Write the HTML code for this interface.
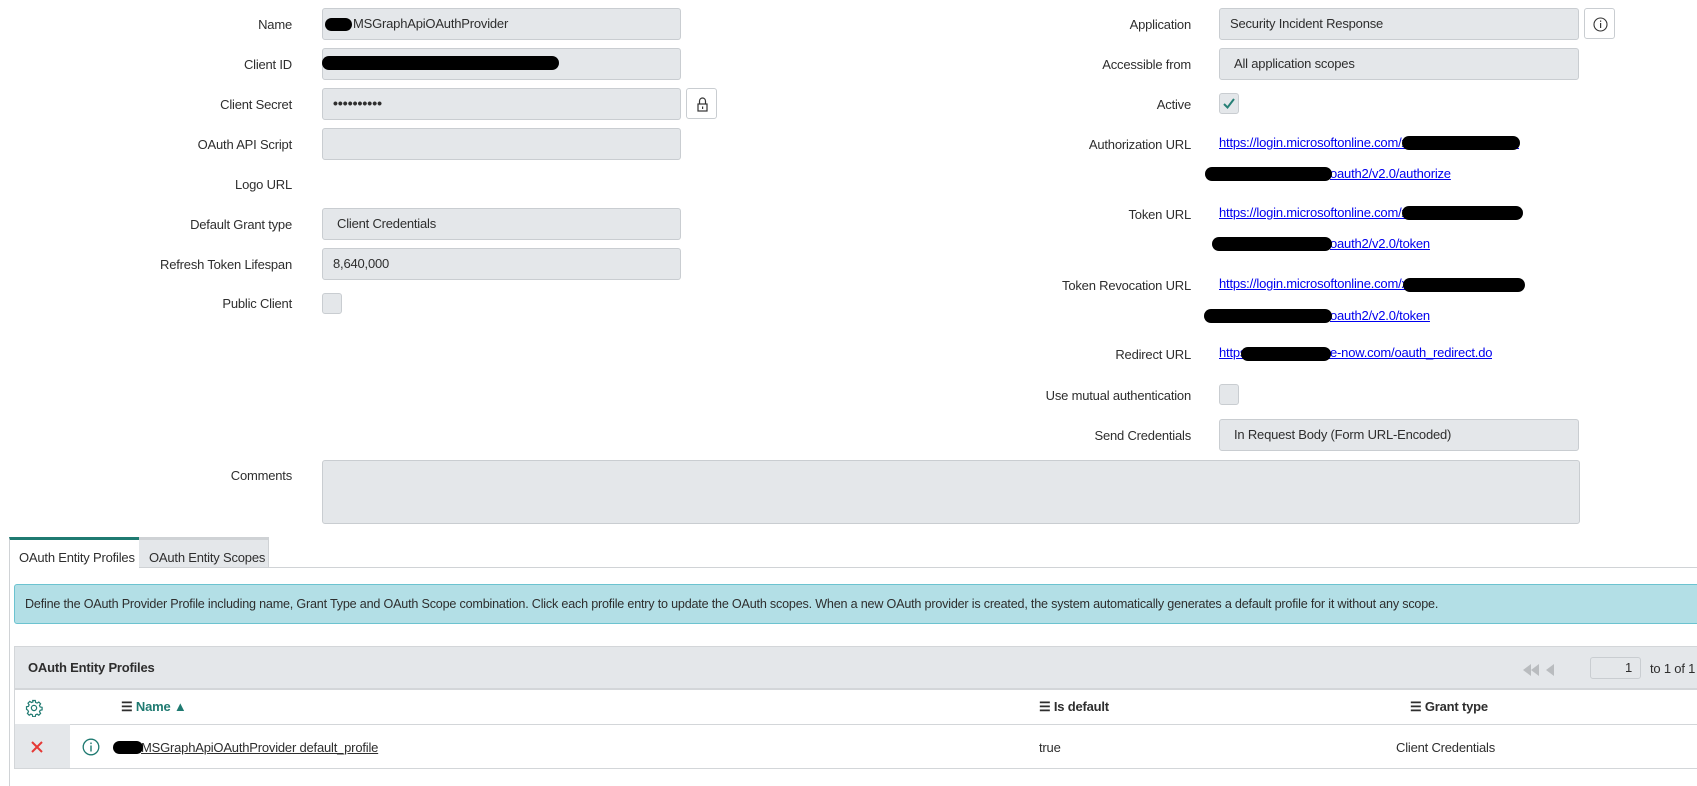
<!DOCTYPE html>
<html><head><meta charset="utf-8"><style>
*{box-sizing:border-box;margin:0;padding:0}
body{width:1697px;height:786px;background:#fff;font-family:"Liberation Sans",sans-serif;font-size:13px;color:#2e2e2e;position:relative;overflow:hidden;letter-spacing:-0.2px}
.a{position:absolute;white-space:nowrap}
.lbl{position:absolute;text-align:right;white-space:nowrap}
.inp{position:absolute;background:#e4e7ea;border:1px solid #c9cdd1;border-radius:3px;padding-left:10px;line-height:29px;white-space:nowrap}
.cb{position:absolute;width:20px;height:21px;background:#e4e7ea;border:1px solid #c9cdd1;border-radius:3px}
.btn{position:absolute;width:31px;height:31px;background:#fff;border:1px solid #c9cdd1;border-radius:3px}
.blob{position:absolute;background:#000;border-radius:8px}
.lk{position:absolute;white-space:nowrap;color:#0000ee;text-decoration:underline;overflow:hidden}
</style></head><body>
<!-- left column -->
<div class="lbl" style="right:1405px;top:17px">Name</div>
<div class="inp" style="left:322px;top:8px;width:359px;height:32px;padding-left:30px">MSGraphApiOAuthProvider</div>
<div class="blob" style="left:325px;top:18px;width:27px;height:13px"></div>
<div class="lbl" style="right:1405px;top:57px">Client ID</div>
<div class="inp" style="left:322px;top:48px;width:359px;height:32px"></div>
<div class="blob" style="left:322px;top:56px;width:237px;height:14px"></div>
<div class="lbl" style="right:1405px;top:97px">Client Secret</div>
<div class="inp" style="left:322px;top:88px;width:359px;height:32px;font-size:14px;letter-spacing:0;font-weight:bold">••••••••••</div>
<div class="btn" style="left:686px;top:88px"><svg width="31" height="31" viewBox="0 0 31 31"><path d="M12.5 15v-3a3 3 0 0 1 6 0v3" fill="none" stroke="#333" stroke-width="1.2"/><rect x="11" y="15" width="9" height="7" fill="none" stroke="#333" stroke-width="1.2"/><rect x="15" y="17.5" width="1.2" height="2.5" fill="#333"/></svg></div>
<div class="lbl" style="right:1405px;top:137px">OAuth API Script</div>
<div class="inp" style="left:322px;top:128px;width:359px;height:32px"></div>
<div class="lbl" style="right:1405px;top:177px">Logo URL</div>
<div class="lbl" style="right:1405px;top:217px">Default Grant type</div>
<div class="inp" style="left:322px;top:208px;width:359px;height:32px;padding-left:14px">Client Credentials</div>
<div class="lbl" style="right:1405px;top:257px">Refresh Token Lifespan</div>
<div class="inp" style="left:322px;top:248px;width:359px;height:32px">8,640,000</div>
<div class="lbl" style="right:1405px;top:296px">Public Client</div>
<div class="cb" style="left:322px;top:293px"></div>
<div class="lbl" style="right:1405px;top:468px">Comments</div>
<div class="inp" style="left:322px;top:460px;width:1258px;height:64px"></div>

<!-- right column -->
<div class="lbl" style="right:506px;top:17px">Application</div>
<div class="inp" style="left:1219px;top:8px;width:360px;height:32px">Security Incident Response</div>
<div class="btn" style="left:1584px;top:8px"><svg width="31" height="31" viewBox="0 0 31 31"><circle cx="15.5" cy="15.5" r="6.5" fill="none" stroke="#333" stroke-width="1.1"/><rect x="15" y="14" width="1.2" height="5" fill="#333"/><rect x="15" y="11.5" width="1.2" height="1.3" fill="#333"/></svg></div>
<div class="lbl" style="right:506px;top:57px">Accessible from</div>
<div class="inp" style="left:1219px;top:48px;width:360px;height:32px;padding-left:14px">All application scopes</div>
<div class="lbl" style="right:506px;top:97px">Active</div>
<div class="cb" style="left:1219px;top:93px"><svg width="18" height="19" viewBox="0 0 18 19"><path d="M4 10l3.5 3.5L14 5" fill="none" stroke="#278076" stroke-width="2"/></svg></div>

<div class="lbl" style="right:506px;top:137px">Authorization URL</div>
<div class="lk" style="left:1219px;top:135px;width:300px">https://login.microsoftonline.com/xxxxxxxxxxxxxxxxxxxxxxxxxxxxxx</div>
<div class="blob" style="left:1402px;top:136px;width:118px;height:14px"></div>
<div class="lk" style="left:1330px;top:166px">oauth2/v2.0/authorize</div>
<div class="blob" style="left:1205px;top:167px;width:127px;height:14px"></div>

<div class="lbl" style="right:506px;top:207px">Token URL</div>
<div class="lk" style="left:1219px;top:205px;width:300px">https://login.microsoftonline.com/xxxxxxxxxxxxxxxxxxxxxxxxxxxxxx</div>
<div class="blob" style="left:1402px;top:206px;width:121px;height:14px"></div>
<div class="lk" style="left:1330px;top:236px">oauth2/v2.0/token</div>
<div class="blob" style="left:1212px;top:237px;width:120px;height:14px"></div>

<div class="lbl" style="right:506px;top:278px">Token Revocation URL</div>
<div class="lk" style="left:1219px;top:276px;width:300px">https://login.microsoftonline.com/xxxxxxxxxxxxxxxxxxxxxxxxxxxxxx</div>
<div class="blob" style="left:1403px;top:278px;width:122px;height:14px"></div>
<div class="lk" style="left:1330px;top:308px">oauth2/v2.0/token</div>
<div class="blob" style="left:1204px;top:309px;width:128px;height:14px"></div>

<div class="lbl" style="right:506px;top:347px">Redirect URL</div>
<div class="lk" style="left:1219px;top:345px;width:112px">httpsxxxxxxxxxxxxxxxxxxxxxxxxx</div>
<div class="lk" style="left:1330px;top:345px">e-now.com/oauth_redirect.do</div>
<div class="blob" style="left:1241px;top:347px;width:90px;height:14px"></div>

<div class="lbl" style="right:506px;top:388px">Use mutual authentication</div>
<div class="cb" style="left:1219px;top:384px"></div>
<div class="lbl" style="right:506px;top:428px">Send Credentials</div>
<div class="inp" style="left:1219px;top:419px;width:360px;height:32px;padding-left:14px">In Request Body (Form URL-Encoded)</div>

<!-- tabs -->
<div class="a" style="left:9px;top:567px;width:1px;height:219px;background:#d0d3d6"></div>
<div class="a" style="left:268px;top:567px;width:1429px;height:1px;background:#d0d3d6"></div>
<div class="a" style="left:9px;top:537px;width:130px;height:31px;border-top:3px solid #1f7a71;background:#fff;border-left:1px solid #d0d3d6;padding:10px 0 0 9px">OAuth Entity Profiles</div>
<div class="a" style="left:139px;top:537px;width:130px;height:31px;border-top:3px solid #cfd2d5;border-right:1px solid #cfd2d5;border-bottom:1px solid #cfd2d5;background:#e4e7ea;padding:10px 0 0 10px">OAuth Entity Scopes</div>
<div class="a" style="left:14px;top:584px;width:1690px;height:40px;background:#b3dfe6;border:1px solid #6cc3d0;border-radius:3px;padding:12px 0 0 10px;font-size:12.6px">Define the OAuth Provider Profile including name, Grant Type and OAuth Scope combination. Click each profile entry to update the OAuth scopes. When a new OAuth provider is created, the system automatically generates a default profile for it without any scope.</div>

<!-- list -->
<div class="a" style="left:14px;top:646px;width:1690px;height:123px;border:1px solid #d3d6d9"></div>
<div class="a" style="left:15px;top:647px;width:1690px;height:43px;background:#e4e7ea;border-bottom:2px solid #d3d6d9"></div>
<div class="a" style="left:28px;top:660px;font-weight:bold">OAuth Entity Profiles</div>
<svg class="a" style="left:1520px;top:662px" width="52" height="16"><path d="M11 2v12L3 8z M19 2v12L11 8z M34 2v12L26 8z" fill="#b9bcbf"/></svg>
<div class="a" style="left:1590px;top:657px;width:51px;height:22px;border:1px solid #c9cdd1;border-radius:3px;background:#e4e7ea;text-align:right;padding-right:8px;line-height:20px">1</div>
<div class="a" style="left:1650px;top:661px">to 1 of 1</div>
<svg class="a" style="left:25px;top:699px" width="18" height="18" viewBox="0 0 24 24"><path d="M12 8.5a3.5 3.5 0 1 0 0 7 3.5 3.5 0 0 0 0-7zM10.3 2h3.4l.5 2.6 2 .9 2.2-1.5 2.4 2.4-1.5 2.2.9 2 2.6.5v3.4l-2.6.5-.9 2 1.5 2.2-2.4 2.4-2.2-1.5-2 .9-.5 2.6h-3.4l-.5-2.6-2-.9-2.2 1.5-2.4-2.4 1.5-2.2-.9-2L2 13.7v-3.4l2.6-.5.9-2L4 5.6 6.4 3.2l2.2 1.5 2-.9z" fill="none" stroke="#1f7a71" stroke-width="1.6"/></svg>
<div class="a" style="left:121px;top:699px;font-weight:bold;color:#1f7a71"><span style="color:#2e2e2e">☰</span> Name ▲</div>
<div class="a" style="left:1039px;top:699px;font-weight:bold">☰ Is default</div>
<div class="a" style="left:1410px;top:699px;font-weight:bold">☰ Grant type</div>
<div class="a" style="left:15px;top:724px;width:55px;height:44px;background:#e4e7ea"></div>
<div class="a" style="left:70px;top:724px;width:1630px;height:1px;background:#d3d6d9"></div>
<svg class="a" style="left:30px;top:740px" width="14" height="14"><path d="M2 2l10 10M12 2L2 12" stroke="#e53935" stroke-width="2"/></svg>
<svg class="a" style="left:82px;top:738px" width="18" height="18" viewBox="0 0 18 18"><circle cx="9" cy="9" r="7.8" fill="none" stroke="#1f7a71" stroke-width="1.3"/><rect x="8.3" y="7.5" width="1.4" height="6" fill="#1f7a71"/><rect x="8.3" y="4.5" width="1.4" height="1.6" fill="#1f7a71"/></svg>
<div class="a" style="left:113px;top:740px;padding-left:28px;text-decoration:underline">MSGraphApiOAuthProvider default_profile</div>
<div class="blob" style="left:113px;top:741px;width:30px;height:13px"></div>
<div class="a" style="left:1039px;top:740px">true</div>
<div class="a" style="left:1396px;top:740px">Client Credentials</div>
</body></html>
